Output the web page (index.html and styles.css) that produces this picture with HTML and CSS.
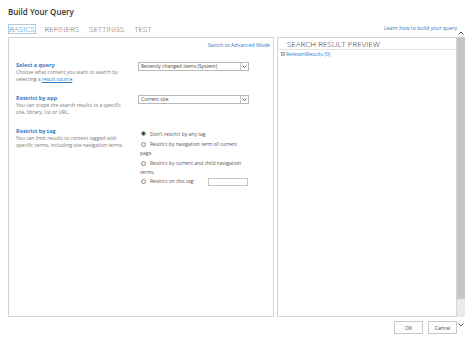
FILE: index.html
```html
<!DOCTYPE html>
<html>
<head>
<meta charset="utf-8">
<title>Build Your Query</title>
<link rel="stylesheet" href="styles.css">
</head>
<body>
<div class="dialog">
  <h1 class="title">Build Your Query</h1>
  <div class="grid">
    <div class="tabrow">
      <nav class="tabs">
        <span class="tab active">BASICS</span>
        <span class="tab">REFINERS</span>
        <span class="tab">SETTINGS</span>
        <span class="tab">TEST</span>
      </nav>
      <a class="learn">Learn how to build your query</a>
    </div>
    <div class="sb-up"><svg width="6" height="4" viewBox="0 0 6 4"><path d="M0.5 3.5 L3 1 L5.5 3.5" fill="none" stroke="#555" stroke-width="1"/></svg></div>

    <div class="panes">
      <section class="pane left">
        <div class="switch"><a>Switch to Advanced Mode</a></div>
        <div class="fields">
          <div class="field">
            <div>
              <h2 class="label">Select a query</h2>
              <p class="desc">Choose what content you want to search by selecting a <a>result source</a>.</p>
            </div>
            <div class="select"><span class="sel-text">Recently changed items (System)</span><span class="arrow"><svg width="5" height="3" viewBox="0 0 5 3"><path d="M0.5 0.5 L2.5 2.5 L4.5 0.5" fill="none" stroke="#444" stroke-width="0.9"/></svg></span></div>
          </div>
          <div class="field">
            <div>
              <h2 class="label">Restrict by app</h2>
              <p class="desc">You can scope the search results to a specific site, library, list or URL.</p>
            </div>
            <div class="select"><span class="sel-text">Current site</span><span class="arrow"><svg width="5" height="3" viewBox="0 0 5 3"><path d="M0.5 0.5 L2.5 2.5 L4.5 0.5" fill="none" stroke="#444" stroke-width="0.9"/></svg></span></div>
          </div>
          <div class="field">
            <div>
              <h2 class="label">Restrict by tag</h2>
              <p class="desc">You can limit results to content tagged with specific terms, including site navigation terms.</p>
            </div>
            <div class="radios">
              <div class="radio first"><span class="dot checked"></span>Don't restrict by any tag</div>
              <div class="radio"><span class="dot"></span>Restrict by navigation term of current page</div>
              <div class="radio"><span class="dot"></span>Restrict by current and child navigation terms.</div>
              <div class="radio nowrap"><span class="dot"></span>Restrict on this tag:<span class="tagbox"></span></div>
            </div>
          </div>
        </div>
      </section>
      <section class="pane right">
        <div class="preview-head">SEARCH RESULT PREVIEW</div>
        <div class="tree"><svg class="tree-icon" width="4" height="4" viewBox="0 0 4 4"><rect x="0.5" y="0.5" width="3" height="3" fill="none" stroke="#888" stroke-width="0.7"/><path d="M1.2 2 H2.8" stroke="#666" stroke-width="0.7"/></svg><span>RelevantResults (0)</span></div>
      </section>
    </div>
    <div class="sb-track"><div class="sb-thumb"></div></div>

    <div class="footer">
      <button class="btn">OK</button>
      <button class="btn">Cancel</button>
    </div>
    <div class="sb-down"><svg width="6" height="4" viewBox="0 0 6 4"><path d="M0.5 0.5 L3 3 L5.5 0.5" fill="none" stroke="#555" stroke-width="1"/></svg></div>
  </div>
</div>
</body>
</html>
```
FILE: styles.css
```css
body {
  margin: 0;
  background: #fff;
  font-family: "Open Sans", "Noto Sans", sans-serif;
  color: #444;
}

.dialog {
  padding: 6px 0 0 8px;
}

.title {
  margin: 0;
  height: 18px;
  font-size: 8px;
  line-height: 11px;
  font-weight: 600;
  color: #333;
}

.grid {
  display: grid;
  grid-template-columns: 449px 8px;
  grid-template-rows: 13px 280px 23px;
}

.tabrow {
  display: flex;
  justify-content: space-between;
  align-items: flex-start;
}

.tabs {
  display: flex;
  gap: 8px;
}

.tab {
  font-size: 8px;
  line-height: 8px;
  font-weight: 300;
  color: #666;
  border: 1px solid transparent;
}

.tab.active {
  color: #2a7cc7;
  border-color: #b4c9de;
}

.learn {
  margin-top: 1px;
  font-size: 5.2px;
  line-height: 7px;
  color: #2a7cc7;
}

.sb-up {
  display: flex;
  align-items: flex-end;
  justify-content: center;
  padding-bottom: 2px;
}

.sb-up svg, .sb-down svg {
  display: block;
}

.panes {
  display: flex;
  gap: 3px;
}

.pane {
  box-sizing: border-box;
  border: 1px solid #d4d4d4;
}

.pane.left {
  width: 266px;
}

.pane.right {
  flex: 1;
}

.switch {
  text-align: right;
  padding: 3.5px 3px 0 0;
  font-size: 5.2px;
  line-height: 7px;
}

.switch a {
  color: #2a7cc7;
}

.fields {
  display: flex;
  flex-direction: column;
  gap: 12px;
  margin-top: 13.5px;
}

.field {
  display: grid;
  grid-template-columns: 112px 111px;
  column-gap: 10px;
  padding-left: 7px;
}

.label {
  margin: 0;
  font-size: 5.5px;
  line-height: 7px;
  font-weight: 700;
  color: #2a7cc7;
}

.desc {
  margin: 0;
  font-size: 5px;
  line-height: 7px;
  color: #777;
}

.desc a {
  color: #2a7cc7;
  text-decoration: underline;
}

.select {
  box-sizing: border-box;
  display: flex;
  height: 9px;
  border: 1px solid #b8b8b8;
  font-size: 5px;
  line-height: 7px;
  color: #444;
}

.sel-text {
  padding-left: 2px;
}

.arrow {
  margin-left: auto;
  width: 7px;
  border-left: 1px solid #c8c8c8;
  display: flex;
  align-items: center;
  justify-content: center;
}

.radios {
  padding: 1.5px 0 0 2px;
  width: 104px;
}

.radio {
  font-size: 5px;
  line-height: 9.3px;
  color: #555;
}

.radio.first {
  margin-bottom: 1.4px;
}

.radio.nowrap {
  white-space: nowrap;
}

.dot {
  box-sizing: border-box;
  display: inline-block;
  width: 5px;
  height: 5px;
  margin: 0 4px 0 1px;
  border: 0.8px solid #888;
  border-radius: 50%;
  vertical-align: -0.8px;
  background: #fff;
}

.dot.checked {
  background: radial-gradient(circle, #333 0 1.2px, #fff 1.5px);
}

.tagbox {
  box-sizing: border-box;
  display: inline-block;
  width: 40px;
  height: 8px;
  margin-left: 13px;
  border: 1px solid #c4c4c4;
  vertical-align: middle;
}

.preview-head {
  height: 11px;
  padding-left: 9px;
  font-size: 8px;
  line-height: 11px;
  font-weight: 300;
  color: #333;
  border-bottom: 1px solid #e2e2e2;
}

.tree {
  display: flex;
  align-items: center;
  padding: 0.5px 0 0 3px;
  font-size: 5px;
  line-height: 7px;
  color: #2a7cc7;
}

.tree-icon {
  display: block;
  margin-right: 1px;
}

.sb-track {
  background: #eaeaea;
}

.sb-thumb {
  height: 262px;
  background: #c6c6c6;
}

.footer {
  display: flex;
  justify-content: flex-end;
  gap: 5px;
  padding-top: 4px;
}

.btn {
  box-sizing: border-box;
  width: 29px;
  height: 13px;
  padding: 0;
  border: 1px solid #c8c8c8;
  background: #fdfdfd;
  font-family: inherit;
  font-size: 5px;
  color: #444;
}

.sb-down {
  display: flex;
  justify-content: center;
  padding-top: 6px;
}
```
